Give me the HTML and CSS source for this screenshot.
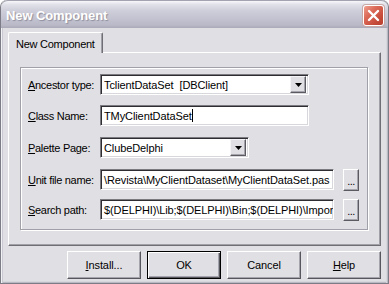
FILE: index.html
```html
<!DOCTYPE html>
<html>
<head>
<meta charset="utf-8">
<link rel="stylesheet" href="styles.css">
</head>
<body>
<div class="window">
  <div class="titlebar">
    <span class="title">New Component</span>
    <span class="close"><svg width="13" height="13" viewBox="0 0 13 13"><path d="M2 2 L11 11 M11 2 L2 11" stroke="#fff" stroke-width="2.4" stroke-linecap="round"/></svg></span>
  </div>
  <div class="client">
    <div class="tabs"><div class="tab">New Component</div></div>
    <div class="panel">
      <div class="group">
        <div class="row">
          <span class="label"><u>A</u>ncestor type:</span>
          <div class="field combo w-208"><span class="val">TclientDataSet  [DBClient]</span><span class="drop"><svg width="7" height="4" viewBox="0 0 7 4"><path d="M0 0 H7 L3.5 4 Z" fill="#000"/></svg></span></div>
        </div>
        <div class="row r-wide">
          <span class="label"><u>C</u>lass Name:</span>
          <div class="field w-208"><span class="val">TMyClientDataSet</span><span class="caret"></span></div>
        </div>
        <div class="row r-wide">
          <span class="label"><u>P</u>alette Page:</span>
          <div class="field combo w-148"><span class="val">ClubeDelphi</span><span class="drop"><svg width="7" height="4" viewBox="0 0 7 4"><path d="M0 0 H7 L3.5 4 Z" fill="#000"/></svg></span></div>
        </div>
        <div class="row r-wide">
          <span class="label"><u>U</u>nit file name:</span>
          <div class="field w-233"><span class="val">\Revista\MyClientDataset\MyClientDataSet.pas</span></div>
          <button class="dots">...</button>
        </div>
        <div class="row r-narrow">
          <span class="label"><u>S</u>earch path:</span>
          <div class="field w-233"><span class="val">$(DELPHI)\Lib;$(DELPHI)\Bin;$(DELPHI)\Impor</span></div>
          <button class="dots">...</button>
        </div>
      </div>
    </div>
    <div class="buttons">
      <button class="btn"><u>I</u>nstall...</button>
      <button class="btn default">OK</button>
      <button class="btn">Cancel</button>
      <button class="btn"><u>H</u>elp</button>
    </div>
  </div>
</div>
</body>
</html>
```

FILE: styles.css
```css
html, body {
  margin: 0;
  padding: 0;
  background: #ffffff;
}
body {
  font-family: "Liberation Sans", Arial, sans-serif;
  font-size: 11px;
  color: #000;
}
.window {
  width: 389px;
  height: 284px;
  box-sizing: border-box;
  background: #e0dfe3;
  border: 1px solid #7c7c86;
  border-top: none;
  border-radius: 7px 7px 0 0;
  box-shadow: inset 1px 0 #f2f2f5, inset 2px 0 #c9c9d2, inset -1px 0 #b9b9c3, inset -2px 0 #d6d6dd, inset 0 -1px #b9b9c3, inset 0 -2px #d6d6dd;
  overflow: hidden;
  display: flex;
  flex-direction: column;
}
.titlebar {
  height: 28px;
  flex: none;
  box-sizing: border-box;
  display: flex;
  align-items: center;
  justify-content: space-between;
  padding: 0 4px 0 5px;
  background: linear-gradient(to bottom, #f8f8fb 0%, #e2e2ea 12%, #cfcfdb 35%, #c3c3d1 65%, #b8b8c7 90%, #a9a9b8 100%);
  border-top: 1px solid #a4a4b0;
  border-radius: 7px 7px 0 0;
}
.title {
  font-weight: bold;
  font-size: 13px;
  color: #ffffff;
  text-shadow: 1px 1px 1px #8e8e9c;
  letter-spacing: -0.1px;
  margin-top: 1px;
}
.close {
  width: 21px;
  height: 21px;
  box-sizing: border-box;
  border: 1px solid #ffffff;
  border-radius: 3px;
  background: linear-gradient(135deg, #f0a090 0%, #dc6a58 35%, #c54a38 75%, #b84030 100%);
  display: flex;
  align-items: center;
  justify-content: center;
  margin-top: 2px;
  box-shadow: 0 0 0 1px #c9a9a6;
}
.client {
  flex: 1;
  display: flex;
  flex-direction: column;
  padding: 4px 7px 0 7px;
}
.tabs {
  display: flex;
  height: 21px;
  position: relative;
  z-index: 1;
  margin-bottom: -1px;
}
.tab {
  width: 95px;
  box-sizing: border-box;
  background: #e0dfe3;
  border-left: 1px solid #ffffff;
  border-top: 1px solid #ffffff;
  border-right: 1px solid #6e6e74;
  box-shadow: inset -1px 0 #a0a0a8;
  border-radius: 2px 2px 0 0;
  padding: 5px 0 0 7px;
  white-space: nowrap;
  letter-spacing: -0.25px;
}
.panel {
  width: 373px;
  box-sizing: border-box;
  border-left: 1px solid #ffffff;
  border-top: 1px solid #ffffff;
  border-right: 1px solid #6e6e74;
  border-bottom: 1px solid #6e6e74;
  box-shadow: inset -1px -1px #a0a0a8;
  padding: 14px 0 15px 11px;
}
.group {
  width: 348px;
  box-sizing: border-box;
  border: 1px solid #a0a0a8;
  box-shadow: inset 1px 1px #ffffff, 1px 1px #ffffff;
  padding: 6px 0 9px 7px;
  display: flex;
  flex-direction: column;
}
.row {
  display: flex;
  align-items: center;
  height: 21px;
}
.r-wide { margin-top: 10px; }
.r-narrow { margin-top: 9px; }
.row:nth-child(3), .row:nth-child(4) { margin-top: 11px; }
.label {
  width: 72px;
  flex: none;
  white-space: nowrap;
  letter-spacing: -0.3px;
}
.field {
  height: 21px;
  box-sizing: border-box;
  background: #ffffff;
  border-top: 1px solid #7a7a80;
  border-left: 1px solid #7a7a80;
  border-right: 1px solid #ffffff;
  border-bottom: 1px solid #ffffff;
  box-shadow: inset 1px 1px #2e2e32, inset -1px -1px #d8d8dc;
  display: flex;
  align-items: center;
  padding-left: 3px;
  overflow: hidden;
  flex: none;
}
.val {
  white-space: pre;
  letter-spacing: -0.1px;
}
.w-208 { width: 209px; }
.w-148 { width: 149px; }
.w-233 { width: 234px; }
.combo {
  justify-content: space-between;
  padding-right: 2px;
}
.drop {
  width: 16px;
  height: 17px;
  box-sizing: border-box;
  background: #e0dfe3;
  border-top: 1px solid #f4f4f6;
  border-left: 1px solid #f4f4f6;
  border-right: 1px solid #5a5a60;
  border-bottom: 1px solid #5a5a60;
  box-shadow: inset -1px -1px #a4a4ac;
  display: flex;
  align-items: center;
  justify-content: center;
  flex: none;
}
.caret {
  width: 1px;
  height: 13px;
  background: #000;
  margin-left: 0;
}
.dots {
  margin: 0 0 0 9px;
  width: 16px;
  height: 22px;
  box-sizing: border-box;
  padding: 0 0 3px 0;
  font-family: "Liberation Sans", Arial, sans-serif;
  font-size: 11px;
  background: #e0dfe3;
  border-top: 1px solid #ffffff;
  border-left: 1px solid #ffffff;
  border-right: 1px solid #5a5a60;
  border-bottom: 1px solid #5a5a60;
  box-shadow: inset -1px -1px #a4a4ac;
  display: flex;
  align-items: flex-end;
  justify-content: center;
  letter-spacing: -0.5px;
  color: #000;
}
.buttons {
  display: flex;
  justify-content: flex-end;
  gap: 6px;
  margin-top: 5px;
  padding-right: 0;
  width: 373px;
}
.btn {
  width: 74px;
  height: 28px;
  box-sizing: border-box;
  margin: 0;
  padding: 0 0 1px 0;
  font-family: "Liberation Sans", Arial, sans-serif;
  font-size: 11px;
  letter-spacing: -0.1px;
  color: #000;
  background: #e0dfe3;
  border-top: 1px solid #ffffff;
  border-left: 1px solid #ffffff;
  border-right: 1px solid #56565c;
  border-bottom: 1px solid #56565c;
  box-shadow: inset -1px -1px #a4a4ac;
}
.btn.default {
  border: 1px solid #000;
  box-shadow: inset 1px 1px #ffffff, inset -1px -1px #56565c, inset -2px -2px #a4a4ac;
}
```
